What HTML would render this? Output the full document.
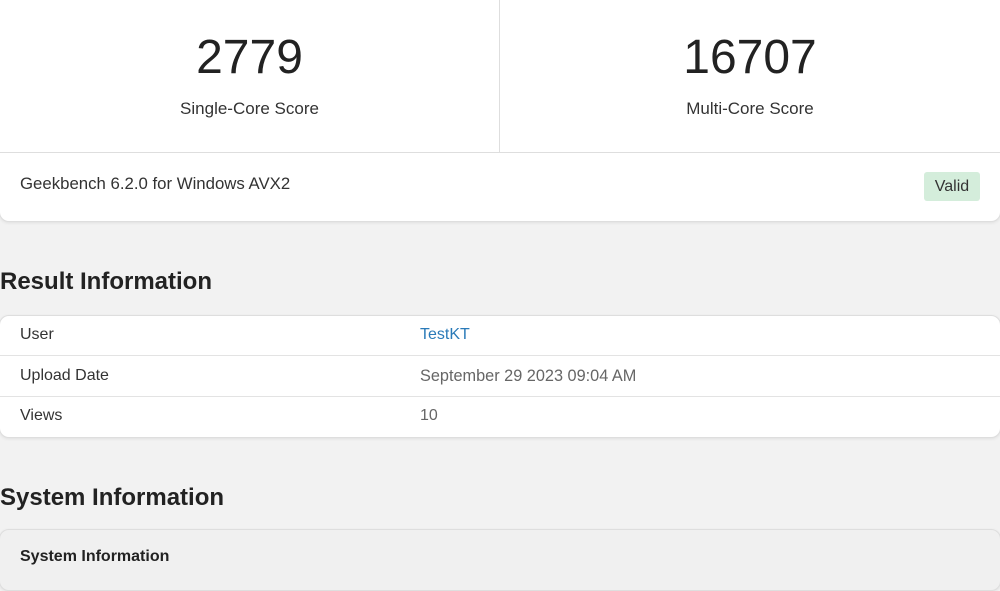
<!DOCTYPE html>
<html><head><style>
body{margin:0;width:1000px;height:572px;overflow:hidden;background:#f2f2f2;font-family:"Liberation Sans",sans-serif;color:#333;position:relative}
.a{position:absolute}
.card{position:absolute;background:#fff;border:1px solid #dedede;box-shadow:0 1px 3px rgba(0,0,0,.08)}
</style></head><body>
<div class="card" style="left:-1px;top:-1px;width:1000px;height:221px;border-radius:0 0 10px 10px"></div>
<div class="a" style="left:499px;top:0;width:1px;height:152px;background:#dedede"></div>
<div class="a" style="left:0;top:152px;width:1000px;height:1px;background:#dedede"></div>
<div class="a" style="left:0;top:30px;width:499px;text-align:center;font-size:48px;color:#222">2779</div>
<div class="a" style="left:0;top:99px;width:499px;text-align:center;font-size:17px">Single-Core Score</div>
<div class="a" style="left:500px;top:30px;width:500px;text-align:center;font-size:48px;color:#222">16707</div>
<div class="a" style="left:500px;top:99px;width:500px;text-align:center;font-size:17px">Multi-Core Score</div>
<div class="a" style="left:20px;top:174px;font-size:16.8px">Geekbench 6.2.0 for Windows AVX2</div>
<div class="a" style="left:924px;top:172px;width:56px;height:29px;background:#d4eddb;border-radius:3px;text-align:center;line-height:29px;font-size:16px">Valid</div>
<div class="a" style="left:0;top:268px;font-size:24px;font-weight:bold;color:#222">Result Information</div>
<div class="card" style="left:-1px;top:315px;width:1000px;height:121px;border-radius:10px"></div>
<div class="a" style="left:0;top:355px;width:1000px;height:1px;background:#e3e3e3"></div>
<div class="a" style="left:0;top:396px;width:1000px;height:1px;background:#e3e3e3"></div>
<div class="a" style="left:20px;top:326px;font-size:16px">User</div>
<div class="a" style="left:420px;top:326px;font-size:16px;color:#2a7ab8">TestKT</div>
<div class="a" style="left:20px;top:367px;font-size:16px">Upload Date</div>
<div class="a" style="left:420px;top:367px;font-size:16.3px;color:#666">September 29 2023 09:04 AM</div>
<div class="a" style="left:20px;top:407px;font-size:16px">Views</div>
<div class="a" style="left:420px;top:407px;font-size:16px;color:#666">10</div>
<div class="a" style="left:0;top:484px;font-size:24px;font-weight:bold;color:#222">System Information</div>
<div class="card" style="left:-1px;top:529px;width:1000px;height:60px;border-radius:10px;background:#f0f0f0"></div>
<div class="a" style="left:20px;top:548px;font-size:16px;font-weight:bold;color:#222">System Information</div>
</body></html>
